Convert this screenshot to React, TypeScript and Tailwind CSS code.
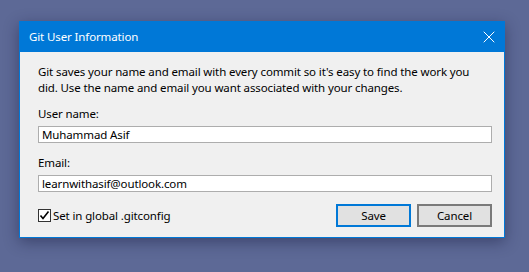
import { X } from "lucide-react";

const font = { fontFamily: '"Noto Sans", "Open Sans", sans-serif' };

function Field({ label, value }: { label: string; value: string }) {
  return (
    <div className="flex flex-col">
      <span className="h-4 leading-4 text-black">{label}</span>
      <div className="mt-1 flex h-[17px] items-center border border-[#adadad] bg-white pl-[3px] leading-4 text-black">
        {value}
      </div>
    </div>
  );
}

export default function App() {
  return (
    <div
      className="h-[272px] w-[529px] overflow-hidden bg-[#5d6996] pl-[19px] pt-[21px] text-[11.5px] tracking-[-0.12px]"
      style={font}
    >
      <div className="flex h-[217px] w-[486px] flex-col border border-[#0078d7] bg-[#f0f0f0] shadow-[0_4px_14px_rgba(20,25,60,0.45)]">
        <div className="flex h-[30px] shrink-0 items-center justify-between bg-[#0078d7] pl-[9px] pr-[5px] text-white">
          <span>Git User Information</span>
          <X size={20} strokeWidth={1.2} className="text-white" />
        </div>

        <div className="flex flex-1 flex-col pl-[18px] pr-[12px] pt-[12px]">
          <p className="whitespace-nowrap leading-4 text-black">
            Git saves your name and email with every commit so it's easy to find the work you
            <br />
            did. Use the name and email you want associated with your changes.
          </p>

          <div className="mt-[10px]">
            <Field label="User name:" value="Muhammad Asif" />
          </div>
          <div className="mt-[12px]">
            <Field label="Email:" value="learnwithasif@outlook.com" />
          </div>

          <div className="mt-[12px] flex items-center justify-between">
            <label className="flex items-center gap-[2px] text-black">
              <span className="grid h-[13px] w-[13px] place-items-center border border-[#333333] bg-white">
                <svg width="11" height="11" viewBox="0 0 11 11">
                  <path d="M1.5 5.5 L4 8.5 L9.5 1.5" fill="none" stroke="#000" strokeWidth="1.6" />
                </svg>
              </span>
              Set in global .gitconfig
            </label>
            <div className="flex gap-[6px]">
              <button className="h-[23px] w-[75px] border-2 border-[#0078d7] bg-[#e1e1e1] text-black">
                Save
              </button>
              <button className="h-[23px] w-[75px] border-2 border-[#7a7a7a] bg-[#e1e1e1] text-black">
                Cancel
              </button>
            </div>
          </div>
        </div>
      </div>
    </div>
  );
}
